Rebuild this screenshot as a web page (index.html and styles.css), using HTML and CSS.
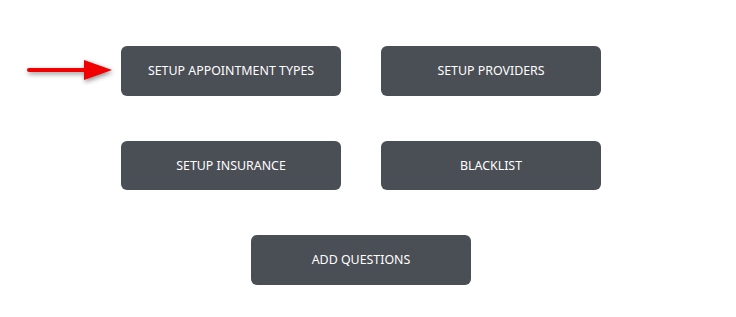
FILE: index.html
```html
<!DOCTYPE html>
<html lang="en">
<head>
  <meta charset="UTF-8">
  <title>Setup</title>
  <link rel="stylesheet" href="styles.css">
</head>
<body>
  <div class="setup">
    <svg class="pointer" width="96" height="32" viewBox="0 0 96 32">
      <line x1="6" y1="15" x2="64" y2="15" stroke="#f00000" stroke-width="4" stroke-linecap="round"/>
      <polygon points="61,5 89,15 61,25" fill="#f00000"/>
    </svg>
    <div class="grid">
      <button class="btn">SETUP APPOINTMENT TYPES</button>
      <button class="btn">SETUP PROVIDERS</button>
      <button class="btn">SETUP INSURANCE</button>
      <button class="btn">BLACKLIST</button>
      <button class="btn wide">ADD QUESTIONS</button>
    </div>
  </div>
</body>
</html>
```

FILE: styles.css
```css
body {
  margin: 0;
  background: #ffffff;
  font-family: "Noto Sans", "Open Sans", sans-serif;
}

.setup {
  position: relative;
  padding: 46px 0 0 121px;
}

.pointer {
  position: absolute;
  left: 23px;
  top: 55px;
  filter: drop-shadow(1px 2px 2.5px rgba(0, 0, 0, 0.45));
}

.grid {
  width: 480px;
  display: grid;
  grid-template-columns: 220px 220px;
  column-gap: 40px;
  row-gap: 45px;
}

.btn {
  height: 49.5px;
  border: none;
  border-radius: 6px;
  background-color: #4a4e55;
  color: #ffffff;
  font-family: inherit;
  font-size: 12.4px;
  padding: 0;
}

.wide {
  grid-column: span 2;
  justify-self: center;
  width: 220px;
}
```
